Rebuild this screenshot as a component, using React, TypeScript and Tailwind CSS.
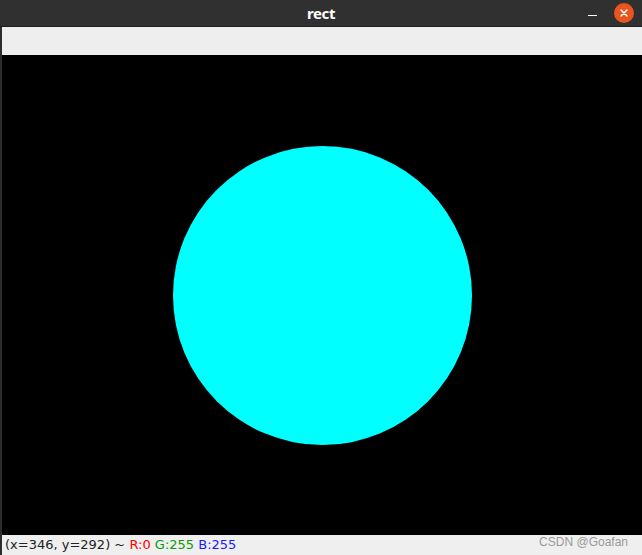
export default function App() {
  return (
    <div className="relative w-[642px] h-[555px] flex flex-col bg-[#2c2c2c] overflow-hidden font-['DejaVu_Sans',sans-serif]">
      {/* title bar */}
      <div className="relative h-[27px] shrink-0 bg-[#313030] flex items-center justify-center border-b border-[#1e1e1e]">
        <span className="text-white font-bold text-[15px] font-['Noto_Sans',sans-serif] tracking-tight">rect</span>
        <div className="absolute right-[8px] top-[3px] flex items-center gap-[17px]">
          <div className="w-[9px] h-[1.5px] bg-white mt-[5px]" />
          <div className="w-[20px] h-[20px] rounded-full bg-[#e9541f] flex items-center justify-center">
            <svg width="10" height="10" viewBox="0 0 10 10">
              <path d="M2 2L8 8M8 2L2 8" stroke="white" strokeWidth="1.5" strokeLinecap="round" />
            </svg>
          </div>
        </div>
      </div>

      <div className="flex flex-1 pl-[2px]">
        <div className="flex-1 flex flex-col">
          {/* toolbar */}
          <div className="h-[28px] shrink-0 bg-[#eeeeee]" />
          {/* image canvas 640x480 */}
          <div className="h-[480px] shrink-0 bg-black flex items-center justify-center">
            <div className="w-[299px] h-[299px] rounded-full bg-[#00ffff]" />
          </div>
          {/* status bar */}
          <div className="relative flex-1 bg-[#efefef] flex items-end pl-[3px] pb-[1px]">
            <span className="text-[13px] leading-[18px] text-[#222] whitespace-pre">
              (x=346, y=292) ~ <span className="text-[#ff0000]">R:0</span>{" "}
              <span className="text-[#0a9a0a]">G:255</span>{" "}
              <span className="text-[#1a1aff]">B:255</span>
            </span>
            <span className="absolute right-[14px] top-[-2px] text-[12px] text-[#9a9a9a] font-['Liberation_Sans',sans-serif]">
              CSDN @Goafan
            </span>
          </div>
        </div>
      </div>
    </div>
  );
}
